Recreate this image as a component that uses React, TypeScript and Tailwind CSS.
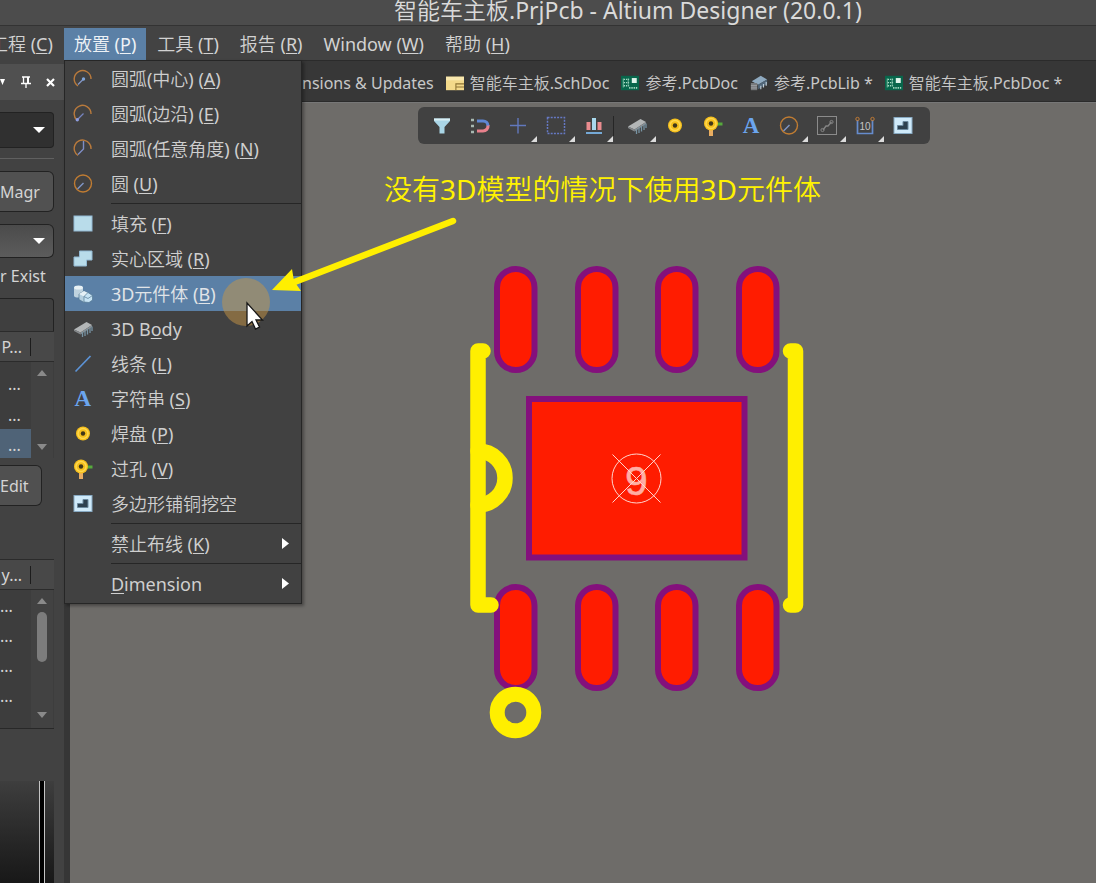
import type { ReactNode } from "react";

const UI_FONT = "font-['Noto_Sans','Noto_Sans_CJK_SC_DemiLight','Noto_Sans_CJK_SC_Light','Noto_Sans_CJK_SC',sans-serif]";

/* ---------- icons ---------- */

function Icon({ children, size = "size-5" }: { children: ReactNode; size?: string }) {
  return (
    <svg viewBox="0 0 20 20" className={`${size} shrink-0`} fill="none" aria-hidden="true">
      {children}
    </svg>
  );
}

const ArcCenterIcon = () => (
  <Icon>
    <path d="M5 17A8.4 8.4 0 1 1 18 10" stroke="#b97a3c" strokeWidth="1.4" />
    <path d="M5 15.500 10 10.500" stroke="#8496c8" strokeWidth="1.3" />
    <circle cx="10.500" cy="10" r="1.700" fill="#7fa6dc" />
  </Icon>
);
const ArcEdgeIcon = () => (
  <Icon>
    <path d="M4 16A8.4 8.4 0 1 1 18 10" stroke="#b97a3c" strokeWidth="1.4" />
    <path d="M4.500 15.500 10.500 9.500" stroke="#7684c0" strokeWidth="1.300" />
    <circle cx="4.300" cy="15.800" r="1.700" fill="#8f9de0" />
  </Icon>
);
const ArcAnyIcon = () => (
  <Icon>
    <path d="M5 16.500A8.400 8.400 0 1 1 18 10" stroke="#b97a3c" strokeWidth="1.400" />
    <path d="M10.500 2V10L5 15.500" stroke="#7f8ec6" strokeWidth="1.400" />
  </Icon>
);
const CircleIcon = () => (
  <Icon>
    <circle cx="10" cy="9.500" r="8.500" stroke="#c07c32" strokeWidth="1.400" />
    <path d="M4.500 15 10.500 9" stroke="#7f96c6" strokeWidth="1.400" />
  </Icon>
);
const FillIcon = () => (
  <Icon>
    <rect x="1" y="2" width="18" height="15" fill="#b9dcea" stroke="#93b9d3" />
  </Icon>
);
const RegionIcon = () => (
  <Icon>
    <path d="M6.500 2H19V11H13.500V17H1V8H6.500Z" fill="#b9dcea" stroke="#93b9d3" />
  </Icon>
);
const Body3dIcon = () => (
  <Icon>
    <path d="M1 3.500V12C2 14 8 14 10 12V3.500Z" fill="#bfd3df" />
    <ellipse cx="5.500" cy="3.500" rx="4.500" ry="2" fill="#e8f1f5" />
    <path d="M6 10 11 7 16 9.500V16L11 18.500 6 15.500Z" fill="#b4cfe0" stroke="#557994" strokeWidth=".7" />
    <path d="M6 10 11 12.500 16 9.500 11 7Z" fill="#e5f0f6" />
    <path d="M11 12.500 15 8.500 19.500 11.500V16L16 18.500 11 18Z" fill="#c6e3f4" stroke="#557994" strokeWidth=".7" />
    <path d="M11 12.500 15 14.500 19.500 11.500" stroke="#557994" strokeWidth=".7" />
  </Icon>
);
const ChipIcon = () => (
  <Icon>
    <path d="M1 10.500 13.500 3 19 6 7.500 13.500Z" fill="#b3b6b7" />
    <path d="M1 10.500 7.500 13.500V15.500L1 12Z" fill="#85898c" />
    <path d="M7.500 13.500 19 6V8L7.500 15.500Z" fill="#8b9195" />
    <path d="M9.500 13V18M12 11.500V17M14.500 10V15.500M17 8.500V14M19 7.500V12" stroke="#7793a3" strokeWidth="1.300" />
  </Icon>
);
const LineIcon = () => (
  <Icon>
    <path d="M2.500 17.500 17.500 2" stroke="#5c93d6" strokeWidth="1.700" />
  </Icon>
);
const StringIcon = () => (
  <span
    aria-hidden="true"
    className="flex w-5 justify-center font-['Liberation_Serif',serif] text-[23px] leading-5 font-bold text-[#6ba5ee]"
  >
    A
  </span>
);
const PadIcon = () => (
  <Icon>
    <circle cx="10" cy="9.500" r="7" fill="#f5bf1c" />
    <circle cx="10" cy="9.500" r="5" stroke="#ffd84e" strokeWidth="1.500" />
    <circle cx="10" cy="9.500" r="2.200" fill="#40361a" />
  </Icon>
);
const ViaIcon = () => (
  <Icon>
    <path d="M12 8H19.500" stroke="#56aa3c" strokeWidth="3" />
    <path d="M8 13V20" stroke="#e9ad62" strokeWidth="4" />
    <circle cx="8" cy="7.500" r="7" fill="#f5bf1c" />
    <circle cx="8" cy="7.500" r="5" stroke="#ffd84e" strokeWidth="1.500" />
    <circle cx="8" cy="7.500" r="2.200" fill="#40361a" />
  </Icon>
);
const CutoutIcon = () => (
  <Icon>
    <rect x="1" y="1.500" width="18" height="16" fill="#cfeafa" stroke="#87a9c2" />
    <path d="M10 5.500H15V13.500H4.500V9.500H10Z" fill="#2d4150" stroke="#6d8ba0" />
  </Icon>
);
const FilterIcon = () => (
  <Icon>
    <path d="M2 2.500H18V5L12.500 11V17.500H7.500V11L2 5Z" fill="#a9d5e6" />
    <path d="M2 2.500H18V4.500H2Z" fill="#d9eff5" />
  </Icon>
);
const MagnetIcon = () => (
  <Icon>
    <path d="M1 4H4M1 10H4M1 16H4" stroke="#a7b8b1" strokeWidth="2.500" />
    <path d="M7 5H13A5 5 0 0 1 18 10" stroke="#5f86d3" strokeWidth="3.200" />
    <path d="M18 9.500A5 5 0 0 1 13 15H7" stroke="#e8818c" strokeWidth="3.200" />
  </Icon>
);
const CrossIcon = () => (
  <Icon>
    <path d="M10 2V17.500M2 9.500H18" stroke="#6278bd" strokeWidth="1.400" />
  </Icon>
);
const SelectAreaIcon = () => (
  <Icon>
    <rect x="1.500" y="1.500" width="17" height="16" stroke="#6679c4" strokeWidth="1.500" strokeDasharray="2 1.200" />
  </Icon>
);
const AlignIcon = () => (
  <Icon>
    <path d="M4.500 6V14M15.500 6V14" stroke="#ea8c8f" strokeWidth="4" />
    <path d="M10 2V14" stroke="#a9d9ee" strokeWidth="4" />
    <path d="M2 17H18" stroke="#75a9d6" strokeWidth="2" />
  </Icon>
);
const RouteIcon = () => (
  <Icon>
    <rect x="0.500" y="0.500" width="19" height="18" stroke="#8b8b8b" />
    <path d="M6 14 9 10H11L14.500 6" stroke="#858585" strokeWidth="1.300" />
    <circle cx="5.500" cy="14" r="1.600" stroke="#858585" />
    <circle cx="14.500" cy="6" r="1.600" stroke="#858585" />
  </Icon>
);
const DimensionIcon = () => (
  <Icon>
    <path d="M2.500 4V17.500H17.500V4" stroke="#668ccd" strokeWidth="1.700" />
    <circle cx="2.500" cy="3" r="1.700" stroke="#bf7a36" />
    <circle cx="17.500" cy="3" r="1.700" stroke="#bf7a36" />
    <text x="10" y="14" textAnchor="middle" fontSize="10" fill="#c5c5c5" className="font-['Liberation_Sans_Narrow',sans-serif]">
      10
    </text>
  </Icon>
);
const SchDocIcon = () => (
  <Icon size="size-[18px]">
    <rect x="0" y="3" width="20" height="15" fill="#f3d98a" />
    <path d="M0 3H20V7H0Z" fill="#f9e8ae" />
    <path d="M11 18V11H20M11 14.500H20" stroke="#8d7332" strokeWidth="1.200" />
  </Icon>
);
const PcbDocIcon = () => (
  <Icon size="size-[18px]">
    <rect x="0" y="2" width="20" height="16" fill="#08664b" />
    <path d="M3 6H9M3 9.500H9M3 13H9" stroke="#a5dac2" strokeWidth="1.500" strokeDasharray="1.500 1" />
    <path d="M2.500 5V15M8 5V12" stroke="#a5dac2" strokeWidth=".8" />
    <rect x="12" y="4.500" width="5.500" height="5.500" fill="#dff3ea" />
    <path d="M9 15.500H19" stroke="#a5dac2" strokeWidth="2" strokeDasharray="1.500 1" />
  </Icon>
);
const PcbLibIcon = () => (
  <Icon size="size-[18px]">
    <path d="M2 8 12 2 19 6 9 12Z" fill="#8faac0" />
    <path d="M9 12 19 6V11L9 17Z" fill="#51677a" />
    <path d="M12 13V17M15 11V15M18 9V13" stroke="#bdcbd6" strokeWidth="1.300" />
    <path d="M1 10H8V18H1Z" fill="#77797c" />
    <path d="M1 13H8M1 15.500H8" stroke="#a5a8aa" />
  </Icon>
);

function Triangle({ direction, className }: { direction: "up" | "down" | "right"; className: string }) {
  const shapes = { up: "M0 10 5 0 10 10Z", down: "M0 0H10L5 10Z", right: "M0 0 10 5 0 10Z" };
  return (
    <svg viewBox="0 0 10 10" preserveAspectRatio="none" className={`shrink-0 ${className}`} aria-hidden="true">
      <path d={shapes[direction]} fill="currentColor" />
    </svg>
  );
}

/* ---------- menus ---------- */

function Key({ children }: { children: string }) {
  return (
    <>
      {" ("}
      <span className="underline underline-offset-2">{children}</span>)
    </>
  );
}

interface Entry {
  label: ReactNode;
  icon?: ReactNode;
  active?: boolean;
  submenu?: boolean;
}

const groups: Entry[][] = [
  [
    { label: <>圆弧(中心)<Key>A</Key></>, icon: <ArcCenterIcon /> },
    { label: <>圆弧(边沿)<Key>E</Key></>, icon: <ArcEdgeIcon /> },
    { label: <>圆弧(任意角度)<Key>N</Key></>, icon: <ArcAnyIcon /> },
    { label: <>圆<Key>U</Key></>, icon: <CircleIcon /> },
  ],
  [
    { label: <>填充<Key>F</Key></>, icon: <FillIcon /> },
    { label: <>实心区域<Key>R</Key></>, icon: <RegionIcon /> },
    { label: <>3D元件体<Key>B</Key></>, icon: <Body3dIcon />, active: true },
    { label: <>3D B<span className="underline underline-offset-2">o</span>dy</>, icon: <ChipIcon /> },
    { label: <>线条<Key>L</Key></>, icon: <LineIcon /> },
    { label: <>字符串<Key>S</Key></>, icon: <StringIcon /> },
    { label: <>焊盘<Key>P</Key></>, icon: <PadIcon /> },
    { label: <>过孔<Key>V</Key></>, icon: <ViaIcon /> },
    { label: <>多边形铺铜挖空</>, icon: <CutoutIcon /> },
  ],
  [{ label: <>禁止布线<Key>K</Key></>, submenu: true }],
  [{ label: <><span className="underline underline-offset-2">D</span>imension</>, submenu: true }],
];

function PlaceMenu() {
  return (
    <div
      role="menu"
      className="absolute top-full left-0 z-20 w-[238px] border border-[#262626] bg-[#414141] pb-0.5 text-[#cfcfcf] shadow-[2px_2px_3px_rgba(0,0,0,0.35)]"
    >
      {groups.map((entries, index) => (
        <div key={index} role="group">
          {index > 0 && <div className="ml-[46px] h-[5px] pt-0.5"><div className="h-px bg-[#262626]" /></div>}
          {entries.map((entry, row) => (
            <button
              key={row}
              role="menuitem"
              className={`flex h-[35px] w-full items-center pr-3 text-left ${entry.active ? "bg-[#5b80a6] text-[#e0e4e8]" : ""}`}
            >
              <span className="flex w-[46px] shrink-0 items-center pl-2">{entry.icon}</span>
              <span className="flex-1 whitespace-nowrap">{entry.label}</span>
              {entry.submenu && <Triangle direction="right" className="h-[11px] w-[7px] text-white" />}
            </button>
          ))}
        </div>
      ))}
    </div>
  );
}

function MenuBar() {
  const item = "h-full px-2.5 whitespace-nowrap";
  return (
    <nav className="flex h-[35px] gap-px border-t border-[#333] bg-[#434343] pt-[2px] text-[18px] leading-6 text-[#d2d2d2]">
      <button className={`${item} -ml-5`}>工程<Key>C</Key></button>
      <div className="relative">
        <button className={`${item} bg-[#5b80a6] text-[#eef2f6]`} aria-expanded="true">放置<Key>P</Key></button>
        <PlaceMenu />
      </div>
      <button className={item}>工具<Key>T</Key></button>
      <button className={item}>报告<Key>R</Key></button>
      <button className={item}>Window<Key>W</Key></button>
      <button className={item}>帮助<Key>H</Key></button>
    </nav>
  );
}

/* ---------- side panel ---------- */

function ListHeader({ label }: { label: string }) {
  return (
    <div className="flex h-[31px] items-center border-y border-[#2b2b2b] bg-[#484848]">
      <span className="w-[30px] pr-2 text-right whitespace-nowrap">{label}</span>
      <span className="h-[18px] w-px bg-[#1c1c1c]" />
    </div>
  );
}

function SidePanel() {
  return (
    <aside className="flex w-[70px] shrink-0 flex-col border-r-[6px] border-[#363636] bg-[#424242] text-[16px] leading-5 text-[#d4d4d4]">
      <div className="mt-1 flex h-9 items-center justify-between bg-[#505050] pr-[9px] text-white">
        <Triangle direction="down" className="h-1.5 w-[5px]" />
        <button aria-label="Pin">
          <svg viewBox="0 0 10 12" className="h-3 w-2.5" fill="none" aria-hidden="true">
            <path d="M1 1H9M2.500 1V7M0 7.500H10M5 8V12" stroke="white" strokeWidth="1.300" />
            <path d="M6 1H8V7H6Z" fill="white" />
          </svg>
        </button>
        <button aria-label="Close">
          <svg viewBox="0 0 9 9" className="size-[9px]" aria-hidden="true">
            <path d="M1 1 8 8M8 1 1 8" stroke="white" strokeWidth="2.200" />
          </svg>
        </button>
      </div>
      <div className="flex flex-1 flex-col pr-[10px]">
        <button aria-label="Preset" className="mt-3 flex h-9 items-center justify-end rounded-r border border-l-0 border-[#222] bg-[#303030] pr-2 text-white">
          <Triangle direction="down" className="h-1.5 w-3" />
        </button>
        <div className="mt-2.5 h-px bg-[#606060]" />
        <button className="mt-3 h-[41px] rounded-r-md border border-l-0 border-[#222] bg-[#515151] text-left">Magr</button>
        <button aria-label="Mode" className="mt-3 flex h-[34px] items-center justify-end rounded-r-md border border-l-0 border-[#222] bg-linear-to-b from-[#4b4b4b] to-[#5c5c5c] pr-2 text-white">
          <Triangle direction="down" className="h-1.5 w-3" />
        </button>
        <div className="mt-2 whitespace-nowrap">r Exist</div>
        <div className="mt-3 h-[33px] rounded-tr border-t border-r border-[#222] bg-[#3f3f3f]" />
        <ListHeader label="P..." />
        <div className="flex h-24 bg-[#3d3d3d]">
          <div className="w-[31px]">
            <div className="h-9 pt-3 pl-2">...</div>
            <div className="h-[31px] pt-[7px] pl-2">...</div>
            <div className="h-[29px] bg-[#4f6377] pt-1.5 pl-2">...</div>
          </div>
          <div className="flex w-[22px] flex-col items-center justify-between bg-[#424242] py-2 text-[#8a8a8a]">
            <Triangle direction="up" className="h-1.5 w-2.5" />
            <Triangle direction="down" className="h-1.5 w-2.5" />
          </div>
        </div>
        <button className="mt-[7px] mr-3 h-[41px] rounded-r-md border border-l-0 border-[#222] bg-[#505050] text-left">Edit</button>
        <div className="mt-[53px]">
          <ListHeader label="y..." />
        </div>
        <div className="flex h-[139px] border-b border-[#282828] bg-[#3d3d3d]">
          <div className="flex w-[31px] flex-col gap-2.5 pt-1.5">
            <div>...</div>
            <div>...</div>
            <div>...</div>
            <div>...</div>
          </div>
          <div className="flex w-[22px] flex-col items-center bg-[#424242] pt-2 pb-2.5 text-[#8a8a8a]">
            <Triangle direction="up" className="h-1.5 w-2.5" />
            <div className="mt-2 h-[50px] w-2.5 rounded-full bg-[#7c7c7c]" />
            <Triangle direction="down" className="mt-auto h-1.5 w-2.5" />
          </div>
        </div>
        <div className="mt-[52px] flex flex-1 justify-end bg-linear-to-b from-[#3e3e3e] to-[#181818] pr-[9px]">
          <div className="w-[6px] border-x border-[#c4c4c4] bg-black" />
        </div>
      </div>
    </aside>
  );
}

/* ---------- document area ---------- */

const tabs = [
  { name: "智能车主板.SchDoc", icon: <SchDocIcon /> },
  { name: "参考.PcbDoc", icon: <PcbDocIcon /> },
  { name: "参考.PcbLib *", icon: <PcbLibIcon /> },
  { name: "智能车主板.PcbDoc *", icon: <PcbDocIcon /> },
];

function DocumentTabs() {
  return (
    <div className="flex h-[42px] items-center gap-3 overflow-hidden border-t border-b border-t-[#2b2b2b] border-b-[#2b2b2b] bg-[#373737] pt-1 pl-[232px] text-[16px] text-[#c8c8c8]">
      <button className="whitespace-nowrap">nsions &amp; Updates</button>
      {tabs.map((tab) => (
        <button key={tab.name} className="flex items-center gap-1.5 whitespace-nowrap">
          {tab.icon}
          {tab.name}
        </button>
      ))}
    </div>
  );
}

const tools = [
  { name: "Filter", icon: <FilterIcon /> },
  { name: "Snap", icon: <MagnetIcon /> },
  { name: "Origin", icon: <CrossIcon />, more: true },
  { name: "Select area", icon: <SelectAreaIcon />, more: true },
  { name: "Align", icon: <AlignIcon />, more: true },
  { name: "Component", icon: <ChipIcon />, more: true, divider: true },
  { name: "Pad", icon: <PadIcon /> },
  { name: "Via", icon: <ViaIcon /> },
  { name: "String", icon: <StringIcon /> },
  { name: "Arc", icon: <CircleIcon />, more: true },
  { name: "Route", icon: <RouteIcon />, more: true },
  { name: "Measure", icon: <DimensionIcon />, more: true },
  { name: "Cutout", icon: <CutoutIcon /> },
];

function Toolbar() {
  return (
    <div role="toolbar" className="absolute top-1 left-[348px] flex h-[37px] items-center rounded-md bg-[#414141] pr-2 pl-[5px]">
      {tools.map((tool) => (
        <div key={tool.name} className="flex h-full items-center">
          {tool.divider && <span className="mr-1 h-5 w-px bg-[#262626]" />}
          <button aria-label={tool.name} className="relative flex h-full w-[38px] items-center justify-center">
            {tool.icon}
            {tool.more && (
              <svg viewBox="0 0 6 6" className="absolute right-0 bottom-0.5 size-1.5" aria-hidden="true">
                <path d="M6 0V6H0Z" fill="#dcdcdc" />
              </svg>
            )}
          </button>
        </div>
      ))}
    </div>
  );
}

const padColumns = [494, 575, 655, 736];
const padRows = [266, 584];

function Footprint() {
  return (
    <svg viewBox="460 260 350 490" className="absolute top-[157px] left-[390px] h-[490px] w-[350px]" fill="none" aria-hidden="true">
      {padRows.map((y) =>
        padColumns.map((x) => (
          <rect key={`${x}-${y}`} x={x + 3} y={y + 3} width="37.500" height="101" rx="18.700" fill="#ff1c00" stroke="#84107c" strokeWidth="6" />
        )),
      )}
      <rect x="529" y="399" width="215.500" height="158.500" fill="#ff1c00" stroke="#84107c" strokeWidth="6" />
      <g stroke="#ffef00" strokeWidth="15.500" strokeLinecap="round" strokeLinejoin="round">
        <path d="M483 351H478V605H491" />
        <path d="M790.500 351H795.500V605H790.500" />
        <path d="M478 451A27 27 0 0 1 478 505" />
        <circle cx="515.500" cy="712.500" r="18.300" strokeWidth="15" />
      </g>
      <text
        x="636.500"
        y="495"
        textAnchor="middle"
        fontSize="41"
        fill="#ffaea4"
        stroke="#ffaea4"
        strokeWidth=".5"
        className="font-['Liberation_Sans_Narrow','Liberation_Sans',sans-serif]"
      >
        9
      </text>
      <circle cx="636.500" cy="478.500" r="24.500" stroke="#ffd5ce" />
      <path d="M612.500 454.500 660.500 502.500M660.500 454.500 612.500 502.500" stroke="#ffd5ce" />
    </svg>
  );
}

function Pointer() {
  return (
    <svg viewBox="0 0 1096 400" className="pointer-events-none absolute top-0 left-0 z-30 h-[400px] w-[1096px]" fill="none" aria-hidden="true">
      <circle cx="246" cy="302" r="24" fill="#c89646" fillOpacity="0.5" />
      <path d="M247 303V326L252 321.500 255.500 329 259.500 327 256 320H262.500Z" fill="white" stroke="#161616" strokeWidth="1.300" />
      <path d="M453 221 292 283" stroke="#ffef00" strokeWidth="6.500" strokeLinecap="round" />
      <path d="M272 290 292 269 294 281 301 291Z" fill="#ffef00" />
    </svg>
  );
}

export default function App() {
  return (
    <div className={`relative flex min-h-screen flex-col overflow-hidden bg-[#434343] ${UI_FONT}`}>
      <header className="h-[25px] bg-[#4c4c4c] pl-[394px]">
        <h1 className="text-[23px] leading-5 whitespace-nowrap text-[#dadada]">
          智能车主板.PrjPcb - Altium Designer (20.0.1)
        </h1>
      </header>
      <MenuBar />
      <div className="flex flex-1">
        <SidePanel />
        <div className="flex min-w-0 flex-1 flex-col">
          <DocumentTabs />
          <main className="relative flex-1 border-t border-[#777] bg-[#6e6c69]">
            <Toolbar />
            <p className="absolute top-[66px] left-[314px] text-[28px] leading-10 whitespace-nowrap text-[#fff200]">
              没有3D模型的情况下使用3D元件体
            </p>
            <Footprint />
          </main>
        </div>
      </div>
      <Pointer />
    </div>
  );
}
